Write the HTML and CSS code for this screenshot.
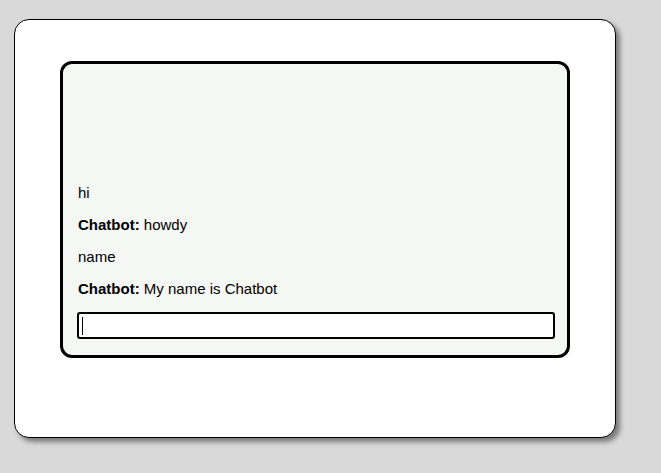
FILE: index.html
```html
<!DOCTYPE html>
<html>
<head>
<meta charset="utf-8">
<link rel="stylesheet" href="styles.css">
</head>
<body>
<div class="card">
  <div class="chat">
    <p class="msg">hi</p>
    <p class="msg"><b>Chatbot:</b> howdy</p>
    <p class="msg">name</p>
    <p class="msg"><b>Chatbot:</b> My name is Chatbot</p>
    <div class="field">
      <input class="entry" type="text">
      <span class="caret"></span>
    </div>
  </div>
</div>
</body>
</html>
```
FILE: styles.css
```css
html, body {
  margin: 0;
  padding: 0;
}
body {
  background: #d9d9d9;
  width: 661px;
  height: 473px;
  padding: 19px 0 0 14px;
  box-sizing: border-box;
  font-family: "Liberation Sans", Arial, sans-serif;
}
.card {
  width: 602px;
  height: 419px;
  box-sizing: border-box;
  background: #fff;
  border: 1px solid #000;
  border-radius: 15px;
  box-shadow: 4px 4px 5px #7a7a7a;
  padding: 41px 45px 0 45px;
}
.chat {
  width: 510px;
  height: 297px;
  box-sizing: border-box;
  border: 3px solid #000;
  border-radius: 12px;
  background: #f5f7f4;
  padding: 0 12px 16px 15px;
  display: flex;
  flex-direction: column;
  justify-content: flex-end;
}
.msg {
  margin: 0 0 15px 0;
  font-size: 15px;
  line-height: 17px;
  color: #000;
}
.field {
  position: relative;
  margin-left: -1px;
}
.entry {
  display: block;
  width: 478px;
  height: 27px;
  box-sizing: border-box;
  border: 2px solid #000;
  border-radius: 3px;
  background: #fff;
  margin: 0;
  padding: 0 4px;
  font-size: 15px;
  font-family: "Liberation Sans", Arial, sans-serif;
  outline: none;
  caret-color: transparent;
}
.caret {
  position: absolute;
  left: 5px;
  top: 5px;
  width: 1px;
  height: 18px;
  background: #000;
}
```
